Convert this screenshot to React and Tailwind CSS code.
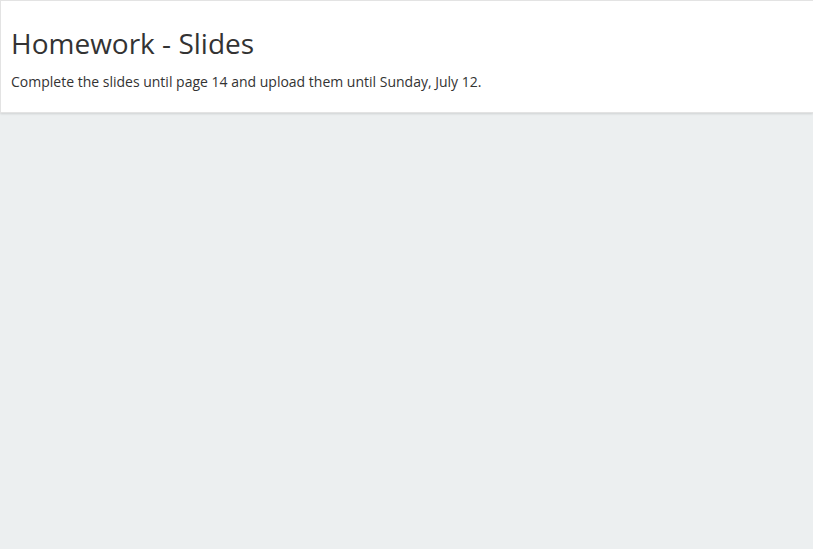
export default function App() {
  return (
    <div className="min-h-[549px] bg-[#eceff0]" style={{ fontFamily: '"Open Sans", sans-serif' }}>
      <div className="bg-white border border-[#e3e3e3] border-r-0 shadow-[0_1px_2px_rgba(0,0,0,0.12)] px-[10px] pt-[24px] pb-[20px]">
        <h1 className="text-[28px] leading-[36px] text-[#333] font-normal">Homework - Slides</h1>
        <p className="mt-[11px] text-[14px] leading-[20px] text-[#333]">
          Complete the slides until page 14 and upload them until Sunday, July 12.
        </p>
      </div>
    </div>
  );
}
